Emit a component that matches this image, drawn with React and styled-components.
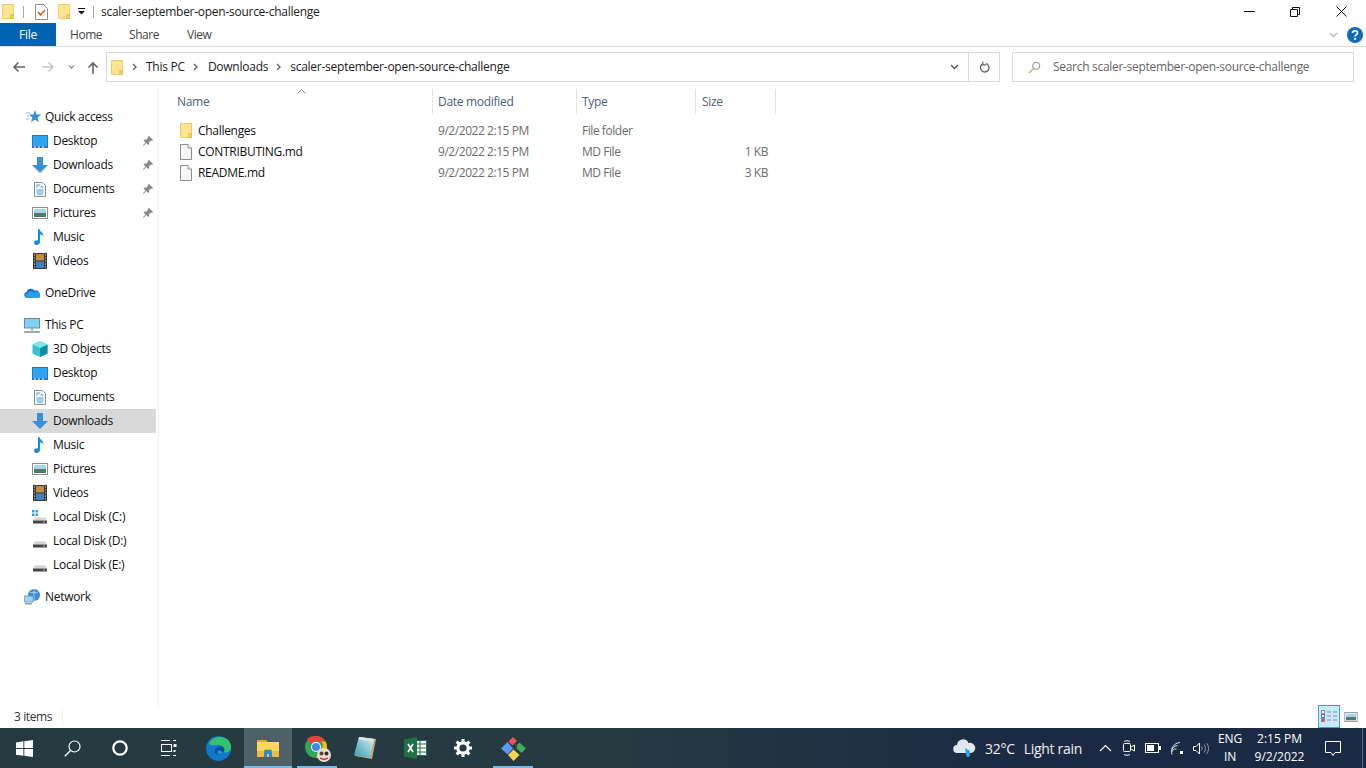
import React from "react";
import styled, { createGlobalStyle } from "styled-components";

const GlobalStyle = createGlobalStyle`
  html, body { margin: 0; padding: 0; background: #fff; }
  body { font-family: "Open Sans", "Noto Sans", "Liberation Sans", sans-serif; font-size: 12px; color: #000; }
  #root { width: 1366px; height: 768px; overflow: hidden; }
`;

const Window = styled.div`
  width: 1366px;
  height: 768px;
  display: flex;
  flex-direction: column;
  overflow: hidden;
  letter-spacing: -0.3px;
`;

const TitleBar = styled.header`
  height: 23px;
  display: flex;
  align-items: center;
  padding: 0 2px;
`;
const TitleSep = styled.span`
  width: 1px;
  height: 12px;
  background: #a9a9a9;
  margin: 0 ${(p) => p.$right}px 0 ${(p) => p.$left}px;
`;
const QuickSlot = styled.span`
  display: flex;
  margin-left: ${(p) => p.$left}px;
`;
const TitleText = styled.span`
  color: #222;
  flex: 1;
  letter-spacing: -0.27px;
`;
const WinButton = styled.button`
  width: 46px;
  height: 23px;
  padding: 0;
  border: 0;
  background: none;
  display: flex;
  align-items: center;
  justify-content: center;
`;

const Tabs = styled.nav`
  height: 23px;
  display: flex;
  align-items: center;
  border-bottom: 1px solid #dadbdc;
`;
const FileTab = styled.div`
  width: 56px;
  height: 23px;
  background: #0063b1;
  color: #fff;
  display: flex;
  align-items: center;
  justify-content: center;
  margin-right: 14px;
`;
const Tab = styled.div`
  color: #444;
  width: ${(p) => p.$w}px;
  letter-spacing: -0.45px;
`;
const RibbonRight = styled.div`
  margin-left: auto;
  margin-right: 3px;
  display: flex;
  align-items: center;
  gap: 9px;
`;

const AddressRow = styled.div`
  height: 41px;
  box-sizing: border-box;
  padding-top: 5px;
  display: flex;
  align-items: flex-start;
`;
const NavIcons = styled.div`
  width: 106px;
  height: 30px;
  display: flex;
  align-items: center;
  padding-left: 12px;
  box-sizing: border-box;
`;
const NavSlot = styled.span`
  display: flex;
  width: ${(p) => p.$w}px;
`;
const AddressBox = styled.div`
  width: 894px;
  height: 30px;
  box-sizing: border-box;
  border: 1px solid #d9d9d9;
  display: flex;
  align-items: center;
  padding-left: 4px;
`;
const Crumb = styled.span`
  color: #1a1a1a;
  padding-bottom: 1px;
  letter-spacing: -0.25px;
`;
const CrumbChevron = styled.span`
  display: flex;
  margin: 0 ${(p) => p.$right ?? 10}px 0 ${(p) => p.$left ?? 8}px;
`;
const AddressEnd = styled.div`
  margin-left: auto;
  height: 100%;
  display: flex;
  align-items: center;
`;
const DropSlot = styled.div`
  width: 30px;
  padding-left: 2px;
  box-sizing: border-box;
  height: 100%;
  display: flex;
  align-items: center;
  justify-content: center;
  border-right: 1px solid #d9d9d9;
`;
const RefreshSlot = styled.div`
  width: 30px;
  padding-left: 1px;
  box-sizing: border-box;
  display: flex;
  justify-content: center;
`;
const SearchBox = styled.div`
  width: 342px;
  height: 30px;
  box-sizing: border-box;
  border: 1px solid #d9d9d9;
  margin-left: 12px;
  display: flex;
  align-items: center;
  padding-left: 15px;
  color: #666;
  gap: 12px;
`;
const SearchText = styled.span`
  padding-bottom: 1px;
`;

const Body = styled.main`
  flex: 1;
  display: flex;
  min-height: 0;
`;
const Sidebar = styled.aside`
  width: 158px;
  flex: none;
  border-right: 1px solid #f0f0f0;
  padding-top: 17px;
`;
const SideRow = styled.div`
  width: 156px;
  height: 24px;
  display: flex;
  align-items: center;
  box-sizing: border-box;
  padding-left: ${(p) => (p.$top ? 24 : 32)}px;
  margin-top: ${(p) => (p.$gap ? 8 : 0)}px;
  background: ${(p) => (p.$active ? "#d9d9d9" : "transparent")};
  color: #111;
`;
const SideIcon = styled.span`
  width: 21px;
  flex: none;
  display: flex;
`;
const SideLabel = styled.span`
  flex: 1;
  padding-bottom: 2px;
`;
const Pin = styled.span`
  display: flex;
  margin-right: 3px;
`;

const List = styled.section`
  flex: 1;
  padding-top: 1px;
`;
const Columns = styled.div`
  display: grid;
  grid-template-columns: 274px 144px 119px 80px;
  width: 617px;
`;
const HeaderRow = styled(Columns)`
  height: 25px;
  margin-bottom: 6px;
  position: relative;
`;
const HeaderCell = styled.div`
  color: #4c607a;
  display: flex;
  align-items: center;
  padding-left: ${(p) => p.$pad}px;
  border-right: 1px solid #e5e5e5;
`;
const SortArrow = styled.span`
  position: absolute;
  left: 138px;
  top: 0;
  display: flex;
`;
const FileRow = styled(Columns)`
  height: 21px;
  align-items: center;
`;
const NameCell = styled.div`
  display: flex;
  align-items: center;
  padding-left: 21px;
  gap: 6px;
  color: #111;
`;
const InfoCell = styled.div`
  color: #6d6d6d;
  padding-left: 5px;
  padding-right: 8px;
  letter-spacing: -0.45px;
  text-align: ${(p) => (p.$right ? "right" : "left")};
`;

const StatusBar = styled.footer`
  height: 22px;
  display: flex;
  align-items: center;
  padding-left: 14px;
  color: #333;
`;
const StatusText = styled.span`
  padding-bottom: 1px;
  letter-spacing: -0.4px;
`;
const StatusSep = styled.span`
  width: 1px;
  height: 14px;
  background: #f0f0f0;
  margin-left: 10px;
`;
const ViewToggles = styled.div`
  margin-left: auto;
  display: flex;
  align-items: center;
  height: 100%;
  margin-right: 8px;
  gap: 4px;
`;
const ViewButton = styled.div`
  width: 22px;
  height: 23px;
  box-sizing: border-box;
  border: 1px solid #3ba0db;
  background: #cce8ff;
  display: flex;
  align-items: center;
  justify-content: center;
  margin-top: -1px;
`;

const Taskbar = styled.div`
  height: 40px;
  flex: none;
  background: linear-gradient(90deg, #253a41 0%, #253a41 45%, #1b2a44 75%, #1b2a44 100%);
  display: flex;
  align-items: stretch;
  color: #fff;
  font-size: 13px;
  letter-spacing: -0.2px;
`;
const TaskItem = styled.div`
  width: ${(p) => p.$w || 48}px;
  margin-left: ${(p) => p.$left || 0}px;
  flex: none;
  box-sizing: border-box;
  display: flex;
  align-items: center;
  justify-content: center;
  background: ${(p) => (p.$active ? "#4e6166" : "transparent")};
  position: relative;
  &::after {
    content: "";
    display: ${(p) => (p.$running ? "block" : "none")};
    position: absolute;
    left: ${(p) => (p.$active ? 0 : 4)}px;
    right: ${(p) => (p.$active ? 0 : 4)}px;
    bottom: 0;
    height: 2px;
    background: #76b9ed;
  }
`;
const Tray = styled.div`
  margin-left: auto;
  display: flex;
  align-items: center;
`;
const Weather = styled.div`
  display: flex;
  align-items: center;
  gap: 9px;
  margin-right: 11px;
  font-size: 14px;
  color: #f0f0f0;
  letter-spacing: -0.3px;
`;
const TraySlot = styled.span`
  width: 24px;
  display: flex;
  justify-content: center;
`;
const Lang = styled.div`
  width: 32px;
  text-align: center;
  font-size: 12px;
  line-height: 18px;
  margin-left: 1px;
`;
const Clock = styled.div`
  width: 66px;
  text-align: center;
  font-size: 12px;
  line-height: 18px;
  letter-spacing: 0;
  padding-left: 1px;
  box-sizing: border-box;
`;
const Notify = styled.span`
  width: 50px;
  box-sizing: border-box;
  padding-right: 8px;
  display: flex;
  justify-content: center;
`;
const ShowDesktop = styled.span`
  width: 4px;
  box-sizing: border-box;
  align-self: stretch;
  border-left: 1px solid #5c6a7c;
`;

const FolderIcon = ({ size = 13 }) => (
  <svg width={size} height={size * 1.25} viewBox="0 0 13 16">
    <path d="M.5.5h12v15H.5z" fill="#ffe38e" stroke="#e9c85e" />
    <path d="M9.5 15.5v-4h3v4z" fill="#f4d46a" stroke="#e3bd4c" />
  </svg>
);
const CheckDocIcon = () => (
  <svg width="13" height="16" viewBox="0 0 13 16">
    <path d="M.5.5h8l4 4v11H.5z" fill="#fff" stroke="#8c8c8c" />
    <path d="M3 8l2.5 3L10 6" fill="none" stroke="#e2561f" strokeWidth="1.5" />
  </svg>
);
const QuickDropdown = () => (
  <svg width="7" height="7" viewBox="0 0 7 7">
    <rect width="7" height="1" fill="#111" />
    <path d="M0 3h7L3.500 6.500z" fill="#111" />
  </svg>
);
const FileIcon = () => (
  <svg width="12" height="16" viewBox="0 0 12 16">
    <path d="M.5.5h7.5l3.5 3.5v11.5H.5z" fill="#f7f7f7" stroke="#8e8e8e" />
    <path d="M8 .5v3.5h3.5" fill="#fff" stroke="#8e8e8e" />
  </svg>
);
const Chevron = ({ color = "#666" }) => (
  <svg width="5" height="8" viewBox="0 0 5 8">
    <path d="M1 1l3 3-3 3" fill="none" stroke={color} strokeWidth="1.4" />
  </svg>
);
const ChevronDown = ({ color = "#666", w = 9 }) => (
  <svg width={w} height="6" viewBox="0 0 9 6">
    <path d="M1 1l3.5 3.5L8 1" fill="none" stroke={color} strokeWidth="1.3" />
  </svg>
);
const BackArrow = ({ color, flip }) => (
  <svg width="14" height="12" viewBox="0 0 14 12" style={flip ? { transform: "scaleX(-1)" } : undefined}>
    <path d="M13 6H2M6.5 1.5L2 6l4.5 4.5" fill="none" stroke={color} strokeWidth="1.6" />
  </svg>
);
const UpArrow = () => (
  <svg width="12" height="13" viewBox="0 0 12 13">
    <path d="M6 13V2M1.5 6.5L6 2l4.5 4.5" fill="none" stroke="#666" strokeWidth="1.6" />
  </svg>
);
const RefreshIcon = () => (
  <svg width="12" height="13" viewBox="0 0 12 13">
    <path d="M7 2.600a4.300 4.300 0 1 1-3.600.5" fill="none" stroke="#666" strokeWidth="1.300" />
    <path d="M3.800.5v3.400h3.200" fill="none" stroke="#666" strokeWidth="1.200" />
  </svg>
);
const SearchGlass = () => (
  <svg width="13" height="13" viewBox="0 0 13 13">
    <circle cx="8.200" cy="4.800" r="3.600" fill="none" stroke="#8a8a8a" />
    <path d="M5.500 7.500L.8 12.200" stroke="#b0a080" strokeWidth="1.200" />
  </svg>
);
const HelpIcon = () => (
  <svg width="16" height="16" viewBox="0 0 16 16">
    <circle cx="8" cy="8" r="8" fill="#0f6cbd" />
    <path d="M5.600 6.100c0-3 4.900-3 4.900-.2 0 1.800-2.400 1.800-2.400 3.600" fill="none" stroke="#fff" strokeWidth="1.800" />
    <rect x="7.100" y="10.800" width="2" height="2" fill="#fff" />
  </svg>
);
const QuickIcon = () => (
  <svg width="18" height="14" viewBox="-2 0 18 14">
    <path d="M9 0l1.500 4.500 4.700.1-3.700 2.900 1.300 4.700L9 9.400l-3.900 2.800 1.300-4.700-3.700-2.900 4.700-.1z" fill="#2f8fdc" />
    <path d="M0 3h4M1 6h2M0 9h3" stroke="#7ec2f2" />
  </svg>
);
const DesktopIcon = () => (
  <svg width="16" height="13" viewBox="0 0 16 13">
    <rect width="16" height="13" fill="#0f7fd6" />
    <rect x="1" y="1" width="14" height="10" fill="#2ba5f0" />
    <path d="M2 12h2M6 12h2M10 12h2" stroke="#fff" />
  </svg>
);
const DownloadIcon = () => (
  <svg width="16" height="16" viewBox="0 0 16 16">
    <path d="M5 0h6v8h5l-8 8-8-8h5z" fill="#3c8ed8" />
  </svg>
);
const DocumentsIcon = () => (
  <svg width="14" height="15" viewBox="-2 0 14 15">
    <path d="M.5.5h8l3 3v11H.5z" fill="#fff" stroke="#8c8c8c" />
    <path d="M6 3H3v3M2.500 8h7M2.500 10h7M2.500 12h7M6.500 5h3" stroke="#3a9ad9" fill="none" />
  </svg>
);
const PicturesIcon = ({ w = 16, h = 12 }) => (
  <svg width={w} height={h} viewBox="0 0 16 12">
    <rect x=".5" y=".5" width="15" height="11" fill="#fff" stroke="#8e8e8e" />
    <rect x="2" y="2" width="12" height="4" fill="#a8d3e8" />
    <rect x="2" y="6" width="12" height="4" fill="#4c7d6c" />
  </svg>
);
const MusicIcon = () => (
  <svg width="14" height="16" viewBox="-2 0 14 16">
    <path d="M4 0h1.500c.3 3 4.500 3.500 4 8C9 6 7.400 5.500 6 5.500V13c0 2-2 3-3.500 3S0 15 0 13.500 2 11 4 11.500z" fill="#0f8de8" />
  </svg>
);
const VideosIcon = () => (
  <svg width="15" height="16" viewBox="-1 0 15 16">
    <rect width="14" height="16" fill="#3b3b3b" />
    <rect x="3" y="1" width="8" height="6.500" fill="#c58a3c" />
    <rect x="3" y="8.500" width="8" height="6.500" fill="#3c82c4" />
    <path d="M1 2h1M1 5h1M1 8h1M1 11h1M1 14h1M12 2h1M12 5h1M12 8h1M12 11h1M12 14h1" stroke="#ddd" />
  </svg>
);
const OneDriveIcon = () => (
  <svg width="16" height="10" viewBox="0 0 16 10">
    <path d="M3 10a3 3 0 0 1-.5-5.900A4.500 4.500 0 0 1 10.500 2.600 3.500 3.500 0 0 1 13 10z" fill="#1174c8" />
    <path d="M3 10a2.500 2.500 0 0 1 1-4.800 3.500 3.500 0 0 1 6-.5A3 3 0 0 1 15 10z" fill="#2d9be8" />
  </svg>
);
const MonitorIcon = () => (
  <svg width="16" height="15" viewBox="0 0 16 15">
    <rect x=".5" y=".5" width="15" height="9.500" fill="#7fd0f7" stroke="#6a8ca0" />
    <path d="M8 10.500v2" stroke="#9aa8b0" strokeWidth="2" />
    <rect y="13" width="16" height="2" fill="#9aa8b0" />
  </svg>
);
const CubeIcon = () => (
  <svg width="16" height="16" viewBox="0 0 16 16">
    <path d="M8 0l7.500 3.500v9L8 16 .5 12.500v-9z" fill="#35c3cf" />
    <path d="M8 7l7.500-3.500v9L8 16z" fill="#0f8fa5" />
    <path d="M8 0l7.500 3.500L8 7 .5 3.500z" fill="#7fe3e8" />
  </svg>
);
const DiskIcon = ({ win }) => (
  <svg width="16" height="14" viewBox="0 0 16 14">
    {win && <path d="M0 0h2.500v2.500H0zM3.500 0H6v2.500H3.500zM0 3.500h2.500V6H0zM3.500 3.500H6V6H3.500z" fill="#2aa5ee" />}
    <path d="M3 7.500h10l2 3H1z" fill="#d6d6d6" />
    <rect x="1" y="10.500" width="14" height="3" fill="#444" />
    <rect x="11" y="11.500" width="2" height="1" fill="#7ed957" />
  </svg>
);
const NetworkIcon = () => (
  <svg width="16" height="16" viewBox="0 0 16 16">
    <circle cx="10" cy="6" r="6" fill="#3d8fd4" />
    <path d="M6 3c2 1 6 1 8 0M10 0v12" stroke="#bfe0f5" strokeWidth=".8" fill="none" />
    <rect x="0" y="7" width="9" height="6" fill="#9fd6f5" stroke="#5f8fae" strokeWidth=".8" />
    <rect x="1" y="14" width="7" height="1.500" fill="#8ea3b0" />
  </svg>
);
const PinIcon = () => (
  <svg width="10" height="10" viewBox="0 0 10 10">
    <path d="M6 0l4 4-1 1-1-.500-2 2 .3 1.800-1 .700-2-2L.500 10 0 9.500l2.500-3-2-2 .700-1 1.800.300 2-2L4.500 1z" fill="#8a8a8a" />
  </svg>
);
const WindowsLogo = () => (
  <svg width="17" height="17" viewBox="0 0 17 17">
    <path d="M0 2.400L7.400 1.300v6.800H0zM8.300 1.200L17 0v8.100H8.300zM0 9h7.400v6.800L0 14.700zM8.300 9H17v8l-8.700-1.200z" fill="#fff" />
  </svg>
);
const TaskSearch = () => (
  <svg width="17" height="17" viewBox="0 0 17 17">
    <circle cx="10.500" cy="6.500" r="5.500" fill="none" stroke="#fff" strokeWidth="1.200" />
    <path d="M6.500 10.500L.8 16.200" stroke="#fff" strokeWidth="1.300" />
  </svg>
);
const Cortana = () => (
  <svg width="16" height="16" viewBox="0 0 16 16">
    <circle cx="8" cy="8" r="6.700" fill="none" stroke="#fff" strokeWidth="2.200" />
  </svg>
);
const TaskView = () => (
  <svg width="17" height="16" viewBox="0 0 17 16">
    <rect x="1.500" y="4.500" width="10" height="7" fill="none" stroke="#fff" />
    <path d="M1 .5h9M1 15.500h9M13 .5h3M13 15.500h3" stroke="#fff" />
    <rect x="13.500" y="4" width="3" height="3" fill="#fff" />
    <rect x="13.500" y="10" width="2" height="2" fill="#fff" />
  </svg>
);
const EdgeIcon = () => (
  <svg width="25" height="25" viewBox="0 0 25 25">
    <circle cx="12.500" cy="12.500" r="12.500" fill="#0f78c9" />
    <path d="M3 8C5 1 15-1 21 3c3 2 4.500 6 4 10-1 3-5 4-8 3 2-3 0-7-5-7-4 0-7 1-9-1z" fill="#36c06e" />
    <path d="M9 15c0-4 6-6 9-3 1 2 0 4-1 5-2 1-5 3-8 0-.5-1 0-1 0-2z" fill="#0b4f9c" />
    <path d="M12 15c2-1 4 0 5 2-2 1.500-5 1.500-6 0z" fill="#1f96dc" />
  </svg>
);
const ExplorerIcon = () => (
  <svg width="22" height="18" viewBox="0 0 22 18">
    <path d="M0 1h9l2 2h11v15H0z" fill="#e8a92a" />
    <rect y="3" width="22" height="15" fill="#ffd75e" />
    <path d="M0 12h7v-2h8v2h7v6H0z" fill="#f4b83a" />
    <path d="M7 18v-5a2 2 0 0 1 2-2h4a2 2 0 0 1 2 2v5h-3v-3h-2v3z" fill="#1e8ed8" />
  </svg>
);
const ChromeIcon = () => (
  <svg width="27" height="27" viewBox="0 0 27 27">
    <circle cx="12" cy="12" r="11" fill="#34a853" />
    <path d="M12 1a11 11 0 0 1 9.500 5.500H12a5.500 5.500 0 0 0-5 3L3 4a11 11 0 0 1 9-3z" fill="#ea4335" />
    <path d="M21.500 6.500A11 11 0 0 1 12 23l4.500-8a5.500 5.500 0 0 0 .5-8.500z" fill="#fbbc05" />
    <circle cx="12" cy="12" r="5" fill="#fff" />
    <circle cx="12" cy="12" r="4" fill="#4285f4" />
    <circle cx="20" cy="20" r="7" fill="#e8dcd2" />
    <circle cx="17.500" cy="18.500" r="2" fill="#6d3b30" />
    <circle cx="22.500" cy="18.500" r="2" fill="#3b2b2b" />
    <path d="M16 23c2 1.500 6 1.500 8 0" stroke="#b23a3a" strokeWidth="1.500" fill="none" />
  </svg>
);
const NotepadIcon = () => (
  <svg width="22" height="24" viewBox="0 0 22 24">
    <defs>
      <linearGradient id="np" x1="0" y1="1" x2="1" y2="0">
        <stop offset="0" stopColor="#2d9bb0" />
        <stop offset="1" stopColor="#dcf0f2" />
      </linearGradient>
    </defs>
    <path d="M6 1l16 2-4 20L1 20z" fill="#c9a878" />
    <path d="M5 1l15 2-4 19L0 19z" fill="url(#np)" />
    <path d="M5 1l15 2-.5 2.500L4.500 3.500z" fill="#dfe6ea" />
  </svg>
);
const ExcelIcon = () => (
  <svg width="23" height="22" viewBox="0 0 23 22">
    <rect x="9" y="3" width="14" height="16" fill="#fff" />
    <path d="M11 3.500h11.500v15H11M11 7h11M11 11h11M11 15h11M16 3.500v15" fill="none" stroke="#1d7145" />
    <path d="M0 2.500L13 0v22L0 19.500z" fill="#1d7145" />
    <path d="M4 7l5 8M9 7l-5 8" stroke="#fff" strokeWidth="1.600" />
  </svg>
);
const GearIcon = () => (
  <svg width="18" height="18" viewBox="0 0 18 18">
    <circle cx="9" cy="9" r="5.200" fill="none" stroke="#fff" strokeWidth="3.200" />
    <path d="M9 0v4M9 14v4M0 9h4M14 9h4M2.600 2.600l2.800 2.800M12.600 12.600l2.800 2.800M15.400 2.600l-2.800 2.800M5.400 12.600l-2.800 2.800" stroke="#fff" strokeWidth="3" />
  </svg>
);
const GitIcon = () => (
  <svg width="25" height="25" viewBox="0 0 25 25">
    <path d="M0 12.500L6.500 6l5.500 6.500L6.500 18.500z" fill="#5b9bf0" />
    <path d="M7.500 5.500L12 1l4 4-4.500 4.500z" fill="#e8545f" />
    <path d="M14 11l4.500-4.500 6.500 6-4.500 4.500z" fill="#3fae5a" />
    <path d="M7 19l5.500-5.500L18.500 19 12.500 25z" fill="#f5d451" />
    <rect x="14" y="8" width="2" height="6" fill="#5a3a3a" />
  </svg>
);
const WeatherIcon = () => (
  <svg width="23" height="20" viewBox="0 0 23 20">
    <path d="M4.500 15a4 4 0 0 1-.5-8A6 6 0 0 1 15.500 5a4.500 4.500 0 0 1 3 10z" fill="#dfe6ee" />
    <path d="M12 10l5 3v4a2 2 0 0 1-4 0z" fill="#2aa1ea" />
  </svg>
);
const TrayChevron = () => (
  <svg width="13" height="8" viewBox="0 0 13 8">
    <path d="M1 7l5.500-5.500L12 7" fill="none" stroke="#fff" strokeWidth="1.100" />
  </svg>
);
const MeetIcon = () => (
  <svg width="12" height="16" viewBox="0 0 12 16">
    <rect x=".5" y="3.500" width="7" height="8" rx="1" fill="none" stroke="#fff" />
    <path d="M8 7l3.500-2v6L8 9M1 1.500c2-1 4-1 6 0M1 14.500c2 1 4 1 6 0" fill="none" stroke="#fff" />
  </svg>
);
const BatteryIcon = () => (
  <svg width="16" height="10" viewBox="0 0 16 10">
    <rect x=".5" y=".5" width="13" height="9" fill="none" stroke="#fff" />
    <rect x="2" y="2" width="7" height="6" fill="#fff" />
    <rect x="14" y="3" width="2" height="4" fill="#fff" />
  </svg>
);
const WifiIcon = () => (
  <svg width="13" height="13" viewBox="0 0 13 13">
    <path d="M.5 8A9 9 0 0 1 9 .5M.5 10.500A6.500 6.500 0 0 1 6.500 3.500M1 12.500A4 4 0 0 1 5.500 7" fill="none" stroke="#ddd" />
    <rect x="9" y="9" width="3" height="3" fill="#fff" />
  </svg>
);
const VolumeIcon = () => (
  <svg width="16" height="13" viewBox="0 0 16 13">
    <path d="M.5 4.500h2.500l3.500-3.500v11l-3.500-3.500H.5z" fill="none" stroke="#fff" />
    <path d="M8.500 4.500a3 3 0 0 1 0 4M11 2.500a6 6 0 0 1 0 8M13.500 1a9 9 0 0 1 0 11" fill="none" stroke="#8d97a6" />
  </svg>
);
const NotifyIcon = () => (
  <svg width="16" height="15" viewBox="0 0 16 15">
    <path d="M.5.5h15v11H10l-2 3-2-3H.5z" fill="none" stroke="#fff" />
  </svg>
);
const DetailsView = () => (
  <svg width="17" height="13" viewBox="0 0 17 13">
    <rect x=".5" y=".5" width="3" height="3" fill="#fff" stroke="#8e8e8e" />
    <rect x=".5" y="4.500" width="3" height="3" fill="#fff" stroke="#3a7bd5" />
    <rect x=".5" y="8.500" width="3" height="3" fill="#e05050" stroke="#8e8e8e" />
    <path d="M6 2h4M12 2h4M6 6h4M12 6h4M6 10h4M12 10h4" stroke="#8a8a8a" />
  </svg>
);

const quickAccess = [
  { name: "Desktop", icon: <DesktopIcon />, pin: true },
  { name: "Downloads", icon: <DownloadIcon />, pin: true },
  { name: "Documents", icon: <DocumentsIcon />, pin: true },
  { name: "Pictures", icon: <PicturesIcon />, pin: true },
  { name: "Music", icon: <MusicIcon /> },
  { name: "Videos", icon: <VideosIcon /> },
];
const thisPc = [
  { name: "3D Objects", icon: <CubeIcon /> },
  { name: "Desktop", icon: <DesktopIcon /> },
  { name: "Documents", icon: <DocumentsIcon /> },
  { name: "Downloads", icon: <DownloadIcon />, active: true },
  { name: "Music", icon: <MusicIcon /> },
  { name: "Pictures", icon: <PicturesIcon /> },
  { name: "Videos", icon: <VideosIcon /> },
  { name: "Local Disk (C:)", icon: <DiskIcon win /> },
  { name: "Local Disk (D:)", icon: <DiskIcon /> },
  { name: "Local Disk (E:)", icon: <DiskIcon /> },
];
const files = [
  { name: "Challenges", icon: <FolderIcon size={12} />, date: "9/2/2022 2:15 PM", type: "File folder", size: "" },
  { name: "CONTRIBUTING.md", icon: <FileIcon />, date: "9/2/2022 2:15 PM", type: "MD File", size: "1 KB" },
  { name: "README.md", icon: <FileIcon />, date: "9/2/2022 2:15 PM", type: "MD File", size: "3 KB" },
];
const taskItems = [
  { icon: <WindowsLogo /> },
  { icon: <TaskSearch /> },
  { icon: <Cortana /> },
  { icon: <TaskView /> },
  { icon: <EdgeIcon />, w: 52 },
  { icon: <ExplorerIcon />, active: true, running: true },
  { icon: <ChromeIcon />, running: true, left: 1 },
  { icon: <NotepadIcon /> },
  { icon: <ExcelIcon />, left: 2 },
  { icon: <GearIcon /> },
  { icon: <GitIcon />, running: true, left: 2 },
];

const SideItem = ({ item }) => (
  <SideRow $active={item.active}>
    <SideIcon>{item.icon}</SideIcon>
    <SideLabel>{item.name}</SideLabel>
    {item.pin && (
      <Pin>
        <PinIcon />
      </Pin>
    )}
  </SideRow>
);

export default function App() {
  return (
    <Window>
      <GlobalStyle />
      <TitleBar>
        <FolderIcon size={12} />
        <TitleSep $left={9} $right={11} />
        <CheckDocIcon />
        <QuickSlot $left={10}><FolderIcon size={12} /></QuickSlot>
        <QuickSlot $left={8}><QuickDropdown /></QuickSlot>
        <TitleSep $left={8} $right={7} />
        <TitleText>scaler-september-open-source-challenge</TitleText>
        <WinButton>
          <svg width="11" height="1"><rect width="11" height="1" fill="#111" /></svg>
        </WinButton>
        <WinButton>
          <svg width="10" height="10" viewBox="0 0 10 10">
            <path d="M.5 2.500h7v7h-7zM2.500 2.500v-2h7v7h-2" fill="none" stroke="#111" />
          </svg>
        </WinButton>
        <WinButton>
          <svg width="11" height="11" viewBox="0 0 11 11">
            <path d="M.5.5l10 10M10.500.5l-10 10" stroke="#111" />
          </svg>
        </WinButton>
      </TitleBar>
      <Tabs>
        <FileTab>File</FileTab>
        <Tab $w={59}>Home</Tab>
        <Tab $w={58}>Share</Tab>
        <Tab $w={40}>View</Tab>
        <RibbonRight>
          <ChevronDown color="#b5b5b5" />
          <HelpIcon />
        </RibbonRight>
      </Tabs>
      <AddressRow>
        <NavIcons>
          <NavSlot $w={29}><BackArrow color="#666" /></NavSlot>
          <NavSlot $w={27}><BackArrow color="#c8c8c8" flip /></NavSlot>
          <NavSlot $w={19}><ChevronDown color="#888" w={7} /></NavSlot>
          <NavSlot $w={12}><UpArrow /></NavSlot>
        </NavIcons>
        <AddressBox>
          <FolderIcon size={12} />
          <CrumbChevron $left={9} $right={9}><Chevron /></CrumbChevron>
          <Crumb>This PC</Crumb>
          <CrumbChevron><Chevron /></CrumbChevron>
          <Crumb>Downloads</Crumb>
          <CrumbChevron $right={9}><Chevron /></CrumbChevron>
          <Crumb>scaler-september-open-source-challenge</Crumb>
          <AddressEnd>
            <DropSlot><ChevronDown color="#555" /></DropSlot>
            <RefreshSlot><RefreshIcon /></RefreshSlot>
          </AddressEnd>
        </AddressBox>
        <SearchBox>
          <SearchGlass />
          <SearchText>Search scaler-september-open-source-challenge</SearchText>
        </SearchBox>
      </AddressRow>
      <Body>
        <Sidebar>
          <SideRow $top>
            <SideIcon><QuickIcon /></SideIcon>
            <SideLabel>Quick access</SideLabel>
          </SideRow>
          {quickAccess.map((item) => (
            <SideItem key={item.name} item={item} />
          ))}
          <SideRow $top $gap>
            <SideIcon><OneDriveIcon /></SideIcon>
            <SideLabel>OneDrive</SideLabel>
          </SideRow>
          <SideRow $top $gap>
            <SideIcon><MonitorIcon /></SideIcon>
            <SideLabel>This PC</SideLabel>
          </SideRow>
          {thisPc.map((item) => (
            <SideItem key={item.name} item={item} />
          ))}
          <SideRow $top $gap>
            <SideIcon><NetworkIcon /></SideIcon>
            <SideLabel>Network</SideLabel>
          </SideRow>
        </Sidebar>
        <List>
          <HeaderRow>
            <HeaderCell $pad={18}>Name</HeaderCell>
            <HeaderCell $pad={5}>Date modified</HeaderCell>
            <HeaderCell $pad={5}>Type</HeaderCell>
            <HeaderCell $pad={6}>Size</HeaderCell>
            <SortArrow>
              <svg width="9" height="5" viewBox="0 0 9 5">
                <path d="M.5 4.500l4-4 4 4" fill="none" stroke="#888" />
              </svg>
            </SortArrow>
          </HeaderRow>
          {files.map((file) => (
            <FileRow key={file.name}>
              <NameCell>{file.icon}<span>{file.name}</span></NameCell>
              <InfoCell>{file.date}</InfoCell>
              <InfoCell>{file.type}</InfoCell>
              <InfoCell $right>{file.size}</InfoCell>
            </FileRow>
          ))}
        </List>
      </Body>
      <StatusBar>
        <StatusText>3 items</StatusText>
        <StatusSep />
        <ViewToggles>
          <ViewButton><DetailsView /></ViewButton>
          <PicturesIcon w={14} h={10} />
        </ViewToggles>
      </StatusBar>
      <Taskbar>
        {taskItems.map((item, i) => (
          <TaskItem key={i} $w={item.w} $left={item.left} $active={item.active} $running={item.running}>
            {item.icon}
          </TaskItem>
        ))}
        <Tray>
          <Weather>
            <WeatherIcon />
            <span>32°C</span>
            <span>Light rain</span>
          </Weather>
          <TraySlot><TrayChevron /></TraySlot>
          <TraySlot><MeetIcon /></TraySlot>
          <TraySlot><BatteryIcon /></TraySlot>
          <TraySlot><WifiIcon /></TraySlot>
          <TraySlot><VolumeIcon /></TraySlot>
          <Lang>ENG<br />IN</Lang>
          <Clock>2:15 PM<br />9/2/2022</Clock>
          <Notify><NotifyIcon /></Notify>
          <ShowDesktop />
        </Tray>
      </Taskbar>
    </Window>
  );
}
